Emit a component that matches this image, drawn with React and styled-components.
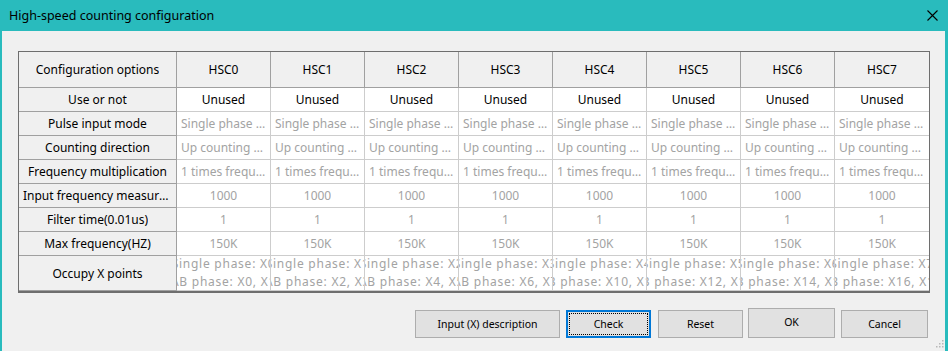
import React from "react"
import styled, { createGlobalStyle } from "styled-components"

const GlobalStyle = createGlobalStyle`
  html, body {
    margin: 0;
    padding: 0;
    background: #f0f0f0;
  }
  body {
    font-family: "Noto Sans", "Open Sans", sans-serif;
    font-size: 12px;
  }
`

const Window = styled.div`
  position: relative;
  width: 948px;
  height: 351px;
  box-sizing: border-box;
  background: #29bbbd;
  display: flex;
  flex-direction: column;
  overflow: hidden;
`
const TitleBar = styled.div`
  height: 31px;
  flex: none;
  display: flex;
  align-items: center;
  justify-content: space-between;
  padding: 0 10px 0 9px;
  color: #000;
  font-size: 12.5px;
`
const CloseIcon = styled.svg`
  width: 11px;
  height: 11px;
`
const Body = styled.div`
  flex: 1;
  margin: 0 3px 0 2px;
  background: #f0f0f0;
  padding: 20px 0 0 16px;
  display: flex;
  flex-direction: column;
`
const Grid = styled.div`
  display: grid;
  grid-template-columns: 158px repeat(8, 94px);
  grid-template-rows: 36px repeat(7, 24px) 35px;
  width: 912px;
  box-sizing: border-box;
  border-top: 1px solid #6e6e6e;
  border-left: 1px solid #6e6e6e;
  border-right: 2px solid #6e6e6e;
  border-bottom: 2px solid #6e6e6e;
  background: #fff;
`
const Cell = styled.div`
  box-sizing: border-box;
  border-right: 1px solid ${p => (p.$head ? "#a0a0a0" : "#cdcdcd")};
  border-bottom: 1px solid ${p => (p.$head ? "#a0a0a0" : "#cdcdcd")};
  background: ${p => (p.$head ? "#f0f0f0" : "#fff")};
  color: ${p => (p.$muted ? "#a3a3a3" : "#000")};
  display: flex;
  align-items: center;
  justify-content: center;
  padding: 0 4px;
  overflow: hidden;
  min-width: 0;
  &:nth-child(9n) {
    border-right: none;
  }
`
const Ellipsis = styled.span`
  white-space: nowrap;
  overflow: hidden;
  text-overflow: ellipsis;
  text-align: center;
  max-width: 100%;
`
const Lines = styled.div`
  flex: none;
  display: flex;
  flex-direction: column;
  align-items: center;
  white-space: nowrap;
  line-height: 18px;
  letter-spacing: 0.75px;
`
const Buttons = styled.div`
  display: flex;
  justify-content: flex-end;
  align-items: flex-end;
  margin-top: 15px;
  padding-right: 17px;
`
const Button = styled.button`
  position: relative;
  box-sizing: border-box;
  width: ${p => p.$w}px;
  height: ${p => (p.$tall ? 30 : 28)}px;
  margin-left: ${p => p.$gap || 0}px;
  background: #e1e1e1;
  border: ${p => (p.$focus ? "2px solid #0078d7" : "1px solid #adadad")};
  font-family: "Noto Sans", "Open Sans", sans-serif;
  font-size: 10.5px;
  color: #000;
  padding: ${p => (p.$tall ? "0 0 3px" : "0")};
  &::after {
    content: "";
    display: ${p => (p.$focus ? "block" : "none")};
    position: absolute;
    inset: 1px;
    border: 1px dotted #000;
  }
`
const Grip = styled.svg`
  position: absolute;
  right: 4px;
  bottom: 2px;
  width: 10px;
  height: 10px;
`

const columns = ["HSC0", "HSC1", "HSC2", "HSC3", "HSC4", "HSC5", "HSC6", "HSC7"]

const rows = [
  { label: "Use or not", value: "Unused", dark: true },
  { label: "Pulse input mode", value: "Single phase pulse input" },
  { label: "Counting direction", value: "Up counting mode" },
  { label: "Frequency multiplication", value: "1 times frequency" },
  { label: "Input frequency measurement period(ms)", value: "1000" },
  { label: "Filter time(0.01us)", value: "1" },
  { label: "Max frequency(HZ)", value: "150K" },
]

const ab = ["X0, X1", "X2, X3", "X4, X5", "X6, X7", "X10, X11", "X12, X13", "X14, X15", "X16, X17"]

const App = () => (
  <Window>
    <GlobalStyle />
    <TitleBar>
      <span>High-speed counting configuration</span>
      <CloseIcon viewBox="0 0 11 11">
        <path d="M0.5 0.5 L10.5 10.5 M10.5 0.5 L0.5 10.5" stroke="#000" strokeWidth="1.1" fill="none" />
      </CloseIcon>
    </TitleBar>
    <Body>
      <Grid>
        <Cell $head>
          <Ellipsis>Configuration options</Ellipsis>
        </Cell>
        {columns.map(c => (
          <Cell $head key={c}>{c}</Cell>
        ))}
        {rows.map(r => (
          <React.Fragment key={r.label}>
            <Cell $head>
              <Ellipsis>{r.label}</Ellipsis>
            </Cell>
            {columns.map(c => (
              <Cell key={c} $muted={!r.dark}>
                <Ellipsis>{r.value}</Ellipsis>
              </Cell>
            ))}
          </React.Fragment>
        ))}
        <Cell $head>
          <Ellipsis>Occupy X points</Ellipsis>
        </Cell>
        {columns.map((c, i) => (
          <Cell key={c} $muted>
            <Lines>
              <span>Single phase: X{i}</span>
              <span>AB phase: {ab[i]}</span>
            </Lines>
          </Cell>
        ))}
      </Grid>
      <Buttons>
        <Button $w={145}>Input (X) description</Button>
        <Button $w={85} $gap={6} $focus>Check</Button>
        <Button $w={85} $gap={7}>Reset</Button>
        <Button $w={87} $gap={5} $tall>OK</Button>
        <Button $w={87} $gap={6}>Cancel</Button>
      </Buttons>
    </Body>
    <Grip viewBox="0 0 10 10">
      {[[8, 0], [8, 3], [5, 3], [8, 6], [5, 6], [2, 6]].map(([x, y]) => (
        <rect key={`${x}-${y}`} x={x} y={y + 1} width="1.5" height="1.5" fill="#b8b8b8" />
      ))}
    </Grip>
  </Window>
)

export default App
